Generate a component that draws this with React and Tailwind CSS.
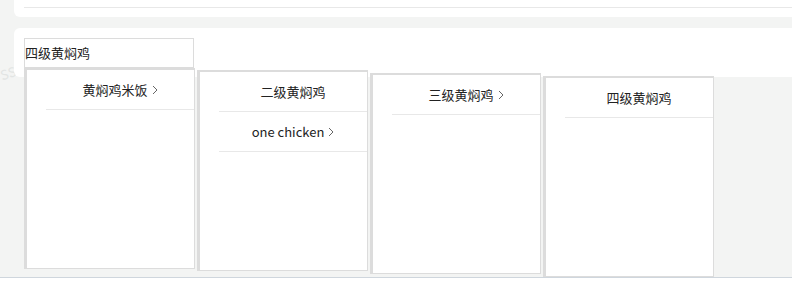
import React from "react";

const font = { fontFamily: '"Noto Sans CJK SC", "Noto Sans", sans-serif' };

function Chevron() {
  return (
    <svg width="6" height="10" viewBox="0 0 6 10" className="ml-[4px] mt-[1px]">
      <path d="M1 1 L5 5 L1 9" fill="none" stroke="#666" strokeWidth="1" />
    </svg>
  );
}

function Item({ label, arrow }) {
  return (
    <div className="ml-[19px] h-[40px] border-b border-[#e8e8e8] flex items-center justify-center text-[13px] text-[#222]">
      <span>{label}</span>
      {arrow && <Chevron />}
    </div>
  );
}

const columns = [
  { offset: "mt-0", items: [{ label: "黄焖鸡米饭", arrow: true }] },
  {
    offset: "mt-[2px]",
    items: [
      { label: "二级黄焖鸡", arrow: false },
      { label: "one chicken", arrow: true },
    ],
  },
  { offset: "mt-[5px]", items: [{ label: "三级黄焖鸡", arrow: true }] },
  { offset: "mt-[8px]", items: [{ label: "四级黄焖鸡", arrow: false }] },
];

export default function App() {
  return (
    <div className="w-[792px] h-[293px] bg-white" style={font}>
      <div className="relative h-[278px] bg-[#f3f4f3] border-b border-[#cfd6dd] overflow-hidden">
        {/* faint watermark, mostly hidden behind the cards */}
        <div className="absolute left-0 top-[62px] -rotate-[18deg] text-[13px] text-[#e2e4e3] tracking-wide">
          SSZ
        </div>

        {/* top card */}
        <div className="relative ml-[14px] mr-[-10px] h-[17px] bg-white rounded-b-md pt-[7px] pl-[10px]">
          <div className="border-t border-[#e8e8e8]" />
        </div>

        {/* cascade card */}
        <div className="relative ml-[14px] mr-[-10px] mt-[11px] h-[49px] bg-white rounded-md pt-[10px] pl-[10px]">
          <div className="w-[170px] h-[30px] border border-[#dcdcdc] bg-white flex items-center text-[13px] text-[#222]">
            四级黄焖鸡
          </div>

          <div className="flex items-start gap-[2px]">
            {columns.map((col, i) => (
              <div
                key={i}
                className={`w-[171px] h-[201px] bg-white border-t-2 border-l-[3px] border-r border-b border-[#dcdcdc] ${col.offset}`}
              >
                {col.items.map((it) => (
                  <Item key={it.label} label={it.label} arrow={it.arrow} />
                ))}
              </div>
            ))}
          </div>
        </div>
      </div>
    </div>
  );
}
